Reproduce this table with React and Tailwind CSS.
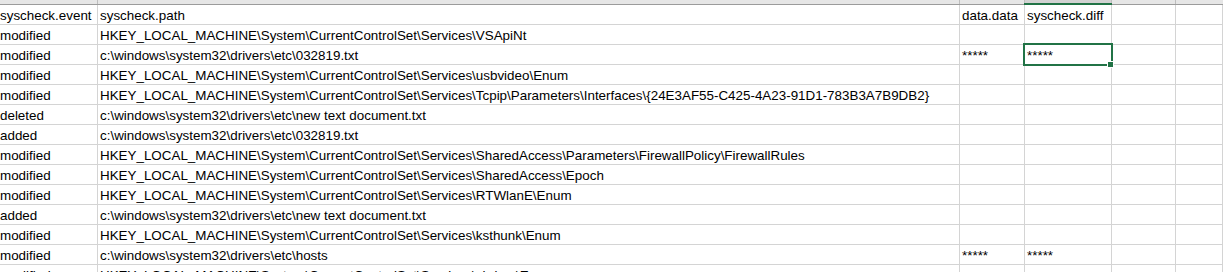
import React from "react";

const cols = ["w-[98px]", "w-[862px]", "w-[65px]", "w-[87px]", "w-[64px]", "flex-1"];

const rows = [
  ["syscheck.event", "syscheck.path", "data.data", "syscheck.diff"],
  ["modified", "HKEY_LOCAL_MACHINE\\System\\CurrentControlSet\\Services\\VSApiNt"],
  ["modified", "c:\\windows\\system32\\drivers\\etc\\032819.txt", "*****", "*****"],
  ["modified", "HKEY_LOCAL_MACHINE\\System\\CurrentControlSet\\Services\\usbvideo\\Enum"],
  [
    "modified",
    "HKEY_LOCAL_MACHINE\\System\\CurrentControlSet\\Services\\Tcpip\\Parameters\\Interfaces\\{24E3AF55-C425-4A23-91D1-783B3A7B9DB2}",
  ],
  ["deleted", "c:\\windows\\system32\\drivers\\etc\\new text document.txt"],
  ["added", "c:\\windows\\system32\\drivers\\etc\\032819.txt"],
  ["modified", "HKEY_LOCAL_MACHINE\\System\\CurrentControlSet\\Services\\SharedAccess\\Parameters\\FirewallPolicy\\FirewallRules"],
  ["modified", "HKEY_LOCAL_MACHINE\\System\\CurrentControlSet\\Services\\SharedAccess\\Epoch"],
  ["modified", "HKEY_LOCAL_MACHINE\\System\\CurrentControlSet\\Services\\RTWlanE\\Enum"],
  ["added", "c:\\windows\\system32\\drivers\\etc\\new text document.txt"],
  ["modified", "HKEY_LOCAL_MACHINE\\System\\CurrentControlSet\\Services\\ksthunk\\Enum"],
  ["modified", "c:\\windows\\system32\\drivers\\etc\\hosts", "*****", "*****"],
  ["modified", "HKEY_LOCAL_MACHINE\\System\\CurrentControlSet\\Services\\vhdmp\\Enum"],
];

const Row = ({ cells }) => (
  <div className="flex h-[20px] shrink-0 border-b border-[#d4d4d4]">
    {cols.map((w, i) => (
      <div
        key={i}
        className={`${w} shrink-0 flex items-end overflow-hidden whitespace-nowrap border-r border-[#d4d4d4] ${
          i === 0 ? "pl-0" : "pl-[2px]"
        } text-[13.4px] leading-[16px] text-black`}
      >
        {cells[i] || ""}
      </div>
    ))}
  </div>
);

export default function App() {
  return (
    <div
      className="relative w-[1223px] h-[272px] overflow-hidden bg-white flex flex-col"
      style={{ fontFamily: '"Liberation Sans", Arial, sans-serif' }}
    >
      {/* column header strip, only bottom edge visible */}
      <div className="flex h-[5px] shrink-0 border-b border-[#9b9b9b] bg-[#e6e6e6]">
        {cols.map((w, i) => (
          <div
            key={i}
            className={`${w} shrink-0 ${i === 5 ? "" : "border-r border-[#bdbdbd]"} ${
              i === 3 ? "bg-[#d2d2d2]" : ""
            }`}
          />
        ))}
      </div>
      <div className="absolute left-[1024px] top-[3px] w-[88px] h-[2px] bg-[#217346]" />

      {rows.map((r, i) => (
        <Row key={i} cells={r} />
      ))}

      {/* active cell */}
      <div className="absolute left-[1023px] top-[43px] w-[90px] h-[23px] border-2 border-[#217346]" />
      <div className="absolute left-[1107px] top-[61px] w-[7px] h-[7px] bg-[#217346] border border-white" />
    </div>
  );
}
